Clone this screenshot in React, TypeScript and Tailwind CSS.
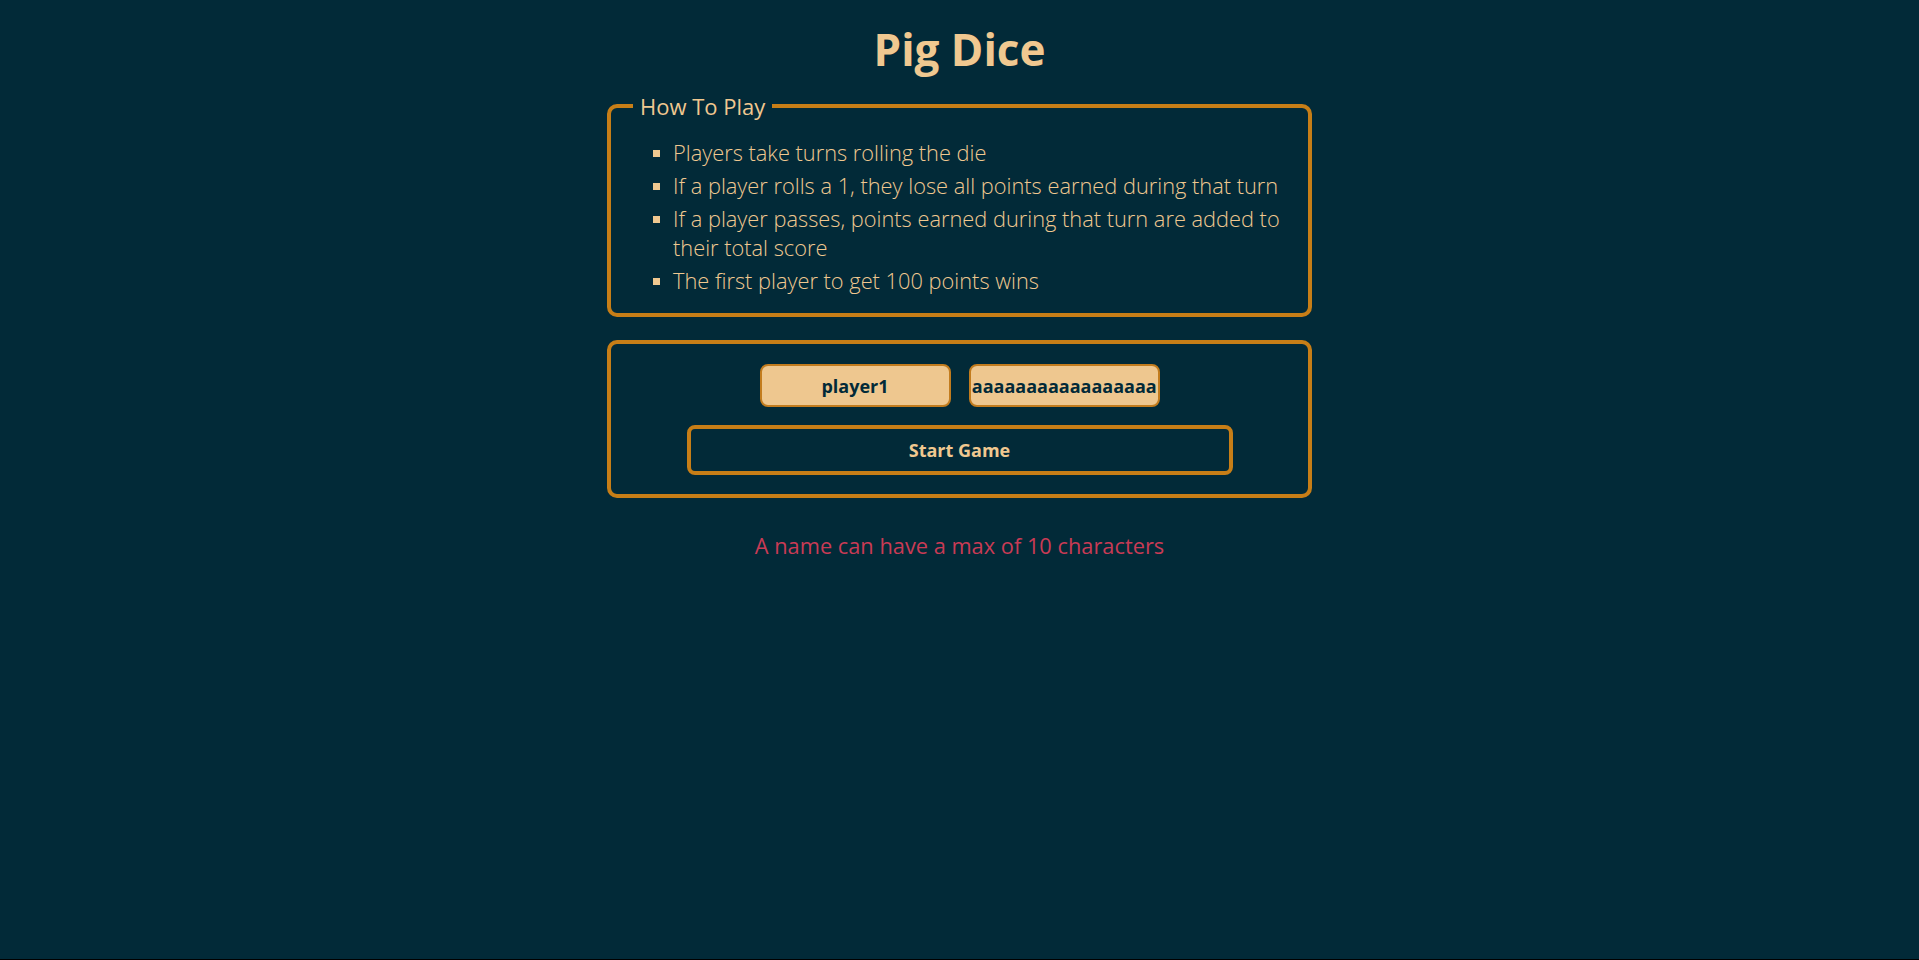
import { useEffect, useRef } from "react";

const rules = [
  "Players take turns rolling the die",
  "If a player rolls a 1, they lose all points earned during that turn",
  "If a player passes, points earned during that turn are added to their total score",
  "The first player to get 100 points wins",
];

const NameInput = ({ value }: { value: string }) => {
  const ref = useRef<HTMLInputElement>(null);

  // keep the end of a long name visible, like after typing
  useEffect(() => {
    if (ref.current) ref.current.scrollLeft = ref.current.scrollWidth;
  }, [value]);

  return (
    <input
      ref={ref}
      type="text"
      value={value}
      readOnly
      className="w-[191px] h-[43px] px-[1px] rounded-lg border-2 border-[#c27c1e] bg-[#eec78f] text-center text-[18px] font-bold text-[#022a38] outline-none"
    />
  );
};

export default function App() {
  return (
    <div className="h-screen bg-black">
      <div
        className="h-[959px] bg-[#022a38] flex flex-col items-center text-[#f0c890]"
        style={{ fontFamily: '"Open Sans", "Liberation Sans", sans-serif' }}
      >
        <h1 className="mt-[18px] text-[44px] leading-[62px] font-bold">Pig Dice</h1>

        {/* Rules */}
        <fieldset className="mt-[11px] w-[705px] border-4 border-[#c77e17] rounded-[10px] px-[22px] pt-[17px] pb-[18px]">
          <legend className="px-[7px] text-[22px] leading-[30px]">How To Play</legend>
          <ul className="pl-[20px] font-light text-[21.8px] leading-[29px]">
            {rules.map((rule, i) => (
              <li key={i} className={`flex items-start ${i > 0 ? "mt-1" : ""}`}>
                <span className="shrink-0 mt-[12px] mr-[13px] w-[7px] h-[7px] bg-[#f0c890]" />
                <span>{rule}</span>
              </li>
            ))}
          </ul>
        </fieldset>

        {/* Player setup */}
        <div className="mt-[23px] w-[705px] border-4 border-[#c77e17] rounded-[10px] pt-[20px] pb-[19px] flex flex-col items-center gap-[18px]">
          <div className="flex gap-[18px]">
            <NameInput value="player1" />
            <NameInput value="aaaaaaaaaaaaaaaaaaaaaa" />
          </div>
          <button className="w-[546px] h-[50px] border-4 border-[#c77e17] rounded-lg bg-transparent text-[18px] font-bold text-[#f0c890]">
            Start Game
          </button>
        </div>

        <p className="mt-[33px] text-[21.8px] leading-[30px] text-[#c93b55]">
          A name can have a max of 10 characters
        </p>
      </div>
    </div>
  );
}
